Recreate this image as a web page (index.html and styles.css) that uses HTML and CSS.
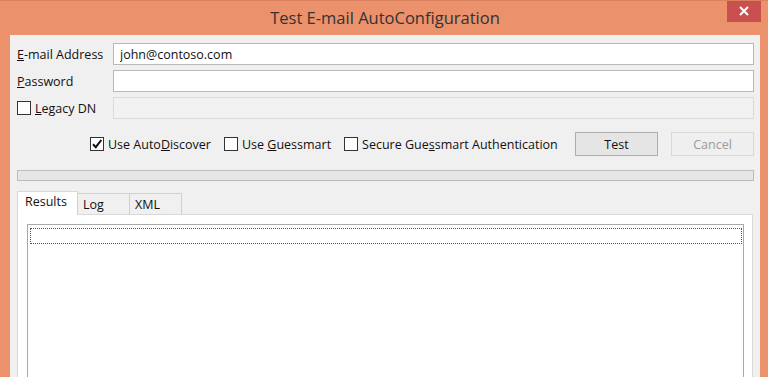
FILE: index.html
```html
<!DOCTYPE html>
<html lang="en">
<head>
    <meta charset="UTF-8">
    <meta name="viewport" content="width=device-width, initial-scale=1.0">
    <title>Test E-mail AutoConfiguration</title>
    <link rel="stylesheet" href="styles.css">
</head>
<body>
    <div class="window">
        <div class="titlebar">
            <span></span>
            <span class="title">Test E-mail AutoConfiguration</span>
            <span class="close-wrap">
                <button type="button" class="close">
                    <svg width="10" height="10" viewBox="0 0 10 10">
                        <path d="M1 1 L9 9 M9 1 L1 9" stroke="#fff" stroke-width="2"/>
                    </svg>
                </button>
            </span>
        </div>

        <div class="content">
            <div class="fields">
                <label for="email"><u>E</u>-mail Address</label>
                <input type="text" id="email" value="john@contoso.com">

                <label for="password"><u>P</u>assword</label>
                <input type="password" id="password">

                <label class="check" for="legacy">
                    <span class="box"></span>
                    <span><u>L</u>egacy DN</span>
                </label>
                <input type="text" id="legacy" disabled>
            </div>

            <div class="options">
                <label class="check">
                    <span class="box">
                        <svg width="12" height="12" viewBox="0 0 12 12">
                            <path d="M2 6.2 L4.8 9.2 L10.3 2" fill="none" stroke="#111" stroke-width="2"/>
                        </svg>
                    </span>
                    <span>Use Auto<u>D</u>iscover</span>
                </label>
                <label class="check">
                    <span class="box"></span>
                    <span>Use <u>G</u>uessmart</span>
                </label>
                <label class="check">
                    <span class="box"></span>
                    <span>Secure Gue<u>s</u>smart Authentication</span>
                </label>
                <div class="buttons">
                    <button type="button" class="btn">Test</button>
                    <button type="button" class="btn" disabled>Cancel</button>
                </div>
            </div>

            <div class="progress"></div>

            <div class="tabs">
                <div class="tab active">Results</div>
                <div class="tab">Log</div>
                <div class="tab">XML</div>
            </div>
            <div class="tab-panel">
                <div class="listbox">
                    <div class="focus-row"></div>
                </div>
            </div>
        </div>
    </div>
</body>
</html>
```

FILE: styles.css
```css
body {
    margin: 0;
    font-family: "Open Sans", "Noto Sans", Arial, sans-serif;
    font-size: 12.5px;
    color: #111;
    overflow: hidden;
}

.window {
    height: 377px;
    background-color: #eb916b;
    border-top: 1px solid #d9825d;
    box-sizing: border-box;
    padding: 0 8px 0 10px;
    display: flex;
    flex-direction: column;
    overflow: hidden;
}

.titlebar {
    height: 34px;
    display: grid;
    grid-template-columns: 1fr auto 1fr;
    align-items: start;
    margin: 0 -8px 0 -10px;
}

.title {
    font-size: 16.5px;
    color: #333;
    line-height: 34px;
    padding-left: 2px;
}

.close-wrap {
    display: flex;
    justify-content: flex-end;
    padding-right: 7px;
}

.close {
    width: 34px;
    height: 22px;
    margin-top: -1px;
    border: none;
    padding: 0;
    background-color: #c8514f;
    display: flex;
    align-items: center;
    justify-content: center;
}

.content {
    flex: 1;
    background-color: #f0f0f0;
    padding: 8px 6px 0 7px;
    display: flex;
    flex-direction: column;
    min-height: 0;
    min-width: 0;
}

.fields {
    display: grid;
    grid-template-columns: 96px 1fr;
    row-gap: 5px;
    align-items: center;
}

.fields label {
    white-space: nowrap;
}

.fields input {
    height: 22px;
    box-sizing: border-box;
    border: 1px solid #b9b9b9;
    background-color: #fff;
    font-family: inherit;
    font-size: 12.5px;
    color: #111;
    padding: 0 6px;
    margin: 0;
    outline: none;
}

.fields input:disabled {
    background-color: #f2f2f2;
    border-color: #dadada;
}

.check {
    display: flex;
    align-items: center;
    gap: 4px;
    white-space: nowrap;
}

.box {
    width: 14px;
    height: 14px;
    box-sizing: border-box;
    border: 1px solid #333;
    background-color: #fff;
    display: flex;
    align-items: center;
    justify-content: center;
}

.options {
    margin-top: 13px;
    height: 24px;
    display: flex;
    align-items: center;
    gap: 13px;
    padding-left: 73px;
}

.buttons {
    margin-left: auto;
    display: flex;
    gap: 13px;
}

.btn {
    width: 83px;
    height: 24px;
    border: 1px solid #adadad;
    background-color: #e5e5e5;
    font-family: inherit;
    font-size: 12.5px;
    color: #111;
    padding: 0;
}

.btn:disabled {
    border-color: #d9d9d9;
    background-color: #efefef;
    color: #9a9a9a;
}

.progress {
    margin-top: 14px;
    height: 11px;
    box-sizing: border-box;
    border: 1px solid #bcbcbc;
    background-color: #e6e6e6;
}

.tabs {
    margin-top: 10px;
    height: 23px;
    display: flex;
    align-items: flex-end;
    position: relative;
    z-index: 1;
}

.tab {
    height: 21px;
    box-sizing: border-box;
    border: 1px solid #d0d0d0;
    border-bottom: none;
    background-color: #f0f0f0;
    padding: 2px 0 0 5px;
    width: 53px;
    margin-left: -1px;
}

.tab.active {
    height: 24px;
    width: 61px;
    margin-left: 0;
    margin-bottom: -1px;
    background-color: #fff;
    padding: 1px 0 0 7px;
    border-color: #d9d9d9;
}

.tab-panel {
    flex: 1;
    background-color: #fff;
    border: 1px solid #d9d9d9;
    border-bottom: none;
    padding: 9px 8px 0 9px;
    margin-right: 1px;
    display: flex;
    flex-direction: column;
}

.listbox {
    flex: 1;
    border: 1px solid #a9a9a9;
    border-bottom: none;
    background-color: #fff;
    padding: 3px 1px 0 2px;
}

.focus-row {
    height: 14px;
    border: 1px dotted #555;
}
```
